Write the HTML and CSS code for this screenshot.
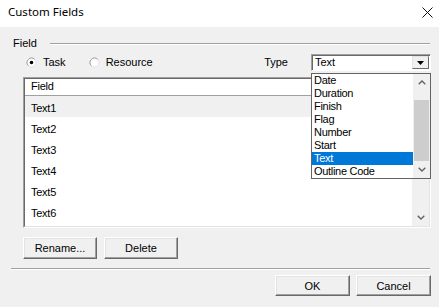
FILE: index.html
```html
<!DOCTYPE html>
<html>
<head>
<meta charset="utf-8">
<title>Custom Fields</title>
<link rel="stylesheet" href="styles.css">
</head>
<body>
<div class="window">
  <div class="titlebar">
    <span class="title">Custom Fields</span>
    <svg class="close" width="11" height="11" viewBox="0 0 11 11"><path d="M0.5 0.5L10.5 10.5M10.5 0.5L0.5 10.5" stroke="#111" stroke-width="1" fill="none"/></svg>
  </div>
  <div class="content">
    <div class="group-head"><span class="group-label">Field</span><span class="group-line"></span></div>
    <div class="type-row">
      <svg class="radio" width="11" height="11" viewBox="0 0 11 11">
        <circle cx="5.5" cy="5.5" r="4.5" fill="#fff" stroke="#e3e3e3" stroke-width="1"/>
        <path d="M8.68 2.32A4.5 4.5 0 0 0 2.32 8.68" stroke="#a0a0a0" stroke-width="1" fill="none"/>
        <circle cx="5.5" cy="5.5" r="1.8" fill="#000"/>
      </svg>
      <span class="lbl">Task</span>
      <svg class="radio radio-2" width="11" height="11" viewBox="0 0 11 11">
        <circle cx="5.5" cy="5.5" r="4.5" fill="#fff" stroke="#e3e3e3" stroke-width="1"/>
        <path d="M8.68 2.32A4.5 4.5 0 0 0 2.32 8.68" stroke="#a0a0a0" stroke-width="1" fill="none"/>
      </svg>
      <span class="lbl">Resource</span>
      <span class="lbl type-lbl">Type</span>
      <div class="combo">
        <span class="combo-text">Text</span>
        <span class="combo-btn"><svg width="7" height="4" viewBox="0 0 7 4"><path d="M0 0H7L3.5 4Z" fill="#000"/></svg></span>
      </div>
    </div>
    <div class="listbox">
      <div class="listbox-inner">
        <div class="list-main">
          <div class="list-header">Field</div>
          <div class="list-row current">Text1</div>
          <div class="list-row">Text2</div>
          <div class="list-row">Text3</div>
          <div class="list-row">Text4</div>
          <div class="list-row">Text5</div>
          <div class="list-row">Text6</div>
        </div>
        <div class="vscroll">
          <span class="sb-track"></span>
          <span class="sb-arrow"><svg width="8" height="5" viewBox="0 0 8 5"><path d="M0.7 0.7L4 4L7.3 0.7" stroke="#606060" stroke-width="1.3" fill="none"/></svg></span>
        </div>
      </div>
    </div>
    <div class="btn-row">
      <button class="btn">Rename...</button>
      <button class="btn">Delete</button>
    </div>
    <div class="separator"></div>
    <div class="footer">
      <button class="btn btn-wide">OK</button>
      <button class="btn btn-wide">Cancel</button>
    </div>
  </div>
  <div class="dropdown">
    <div class="dd-items">
      <div class="dd-item">Date</div>
      <div class="dd-item">Duration</div>
      <div class="dd-item">Finish</div>
      <div class="dd-item">Flag</div>
      <div class="dd-item">Number</div>
      <div class="dd-item">Start</div>
      <div class="dd-item selected">Text</div>
      <div class="dd-item">Outline Code</div>
    </div>
    <div class="dd-scroll">
      <span class="sb-arrow"><svg width="8" height="5" viewBox="0 0 8 5"><path d="M0.7 4.3L4 1L7.3 4.3" stroke="#606060" stroke-width="1.3" fill="none"/></svg></span>
      <span class="dd-track"><span class="dd-thumb"></span></span>
      <span class="sb-arrow"><svg width="8" height="5" viewBox="0 0 8 5"><path d="M0.7 0.7L4 4L7.3 0.7" stroke="#606060" stroke-width="1.3" fill="none"/></svg></span>
    </div>
  </div>
</div>
</body>
</html>
```
FILE: styles.css
```css
* { box-sizing: border-box; }
html, body { margin: 0; padding: 0; }
body { background: #f0f0f0; font-family: "Liberation Sans", Arial, sans-serif; font-size: 11px; color: #000; }

.window {
  position: relative;
  width: 439px;
  height: 307px;
  background: #f0f0f0;
  display: flex;
  flex-direction: column;
  overflow: hidden;
}

.titlebar {
  height: 27px;
  background: #fff;
  display: flex;
  align-items: flex-start;
  justify-content: space-between;
  padding: 4px 6px 0 8px;
}
.title {
  font-family: "Noto Sans", "Open Sans", sans-serif;
  font-size: 11.5px;
  line-height: 16px;
}
.close { margin-top: 3px; }

.content { display: flex; flex-direction: column; }

.group-head {
  height: 12px;
  margin: 10px 9px 0 13px;
  display: flex;
  align-items: center;
}
.group-label { line-height: 12px; }
.group-line {
  flex: 1;
  height: 1px;
  margin-left: 13px;
  background: #a0a0a0;
  box-shadow: 0 1px 0 #fff;
}

.type-row {
  height: 17px;
  margin-top: 5px;
  padding: 0 8px 0 26px;
  display: flex;
  align-items: center;
}
.radio { flex: none; }
.radio-2 { margin-left: 23px; }
.lbl { margin-left: 6px; line-height: 13px; }
.type-lbl { margin-left: auto; margin-right: 23px; }

.combo {
  width: 120px;
  height: 17px;
  background: #fff;
  border: 1px solid;
  border-color: #a0a0a0 #fff #fff #a0a0a0;
  display: flex;
  align-items: center;
  position: relative;
}
.combo::before {
  content: "";
  position: absolute;
  inset: 0;
  border-top: 1px solid #696969;
  border-left: 1px solid #696969;
  pointer-events: none;
}
.combo-text { flex: 1; padding-left: 3px; line-height: 13px; }
.combo-btn {
  width: 17px;
  height: 13px;
  margin-right: 1px;
  background: #f0f0f0;
  border: 1px solid;
  border-color: #e3e3e3 #696969 #696969 #e3e3e3;
  display: flex;
  align-items: center;
  justify-content: center;
}

.listbox {
  height: 151px;
  margin: 6px 8px 0 23px;
  border: 1px solid;
  border-color: #a0a0a0 #fff #fff #a0a0a0;
}
.listbox-inner {
  height: 100%;
  border: 1px solid;
  border-color: #696969 #e3e3e3 #e3e3e3 #696969;
  background: #fff;
  display: grid;
  grid-template-columns: 1fr 17px;
  overflow: hidden;
}
.list-main { overflow: hidden; letter-spacing: -0.25px; }
.list-header {
  height: 17px;
  line-height: 15px;
  padding-left: 6px;
  background: #fff;
  border-bottom: 1px solid #a0a0a0;
}
.list-row {
  height: 21px;
  padding: 3px 0 0 6px;
  line-height: 18px;
}
.list-row.current { background: #f0f0f0; }

.vscroll {
  background: #f0f0f0;
  display: flex;
  flex-direction: column;
}
.sb-track { flex: 1; }
.sb-arrow {
  height: 17px;
  flex: none;
  display: flex;
  align-items: center;
  justify-content: center;
}

.btn-row {
  margin-top: 9px;
  padding-left: 23px;
  display: flex;
  gap: 7px;
}
.btn {
  width: 74px;
  height: 22px;
  padding: 0;
  font-family: "Liberation Sans", Arial, sans-serif;
  font-size: 11px;
  color: #000;
  background: #f0f0f0;
  border: 1px solid;
  border-color: #fff #696969 #696969 #fff;
  box-shadow: inset -1px -1px 0 #a0a0a0, inset 1px 1px 0 #e3e3e3;
}
.btn-wide { width: 75px; height: 21px; }

.separator {
  height: 1px;
  margin: 9px 9px 0 11px;
  background: #a0a0a0;
  box-shadow: 0 1px 0 #fff;
}

.footer {
  margin-top: 6px;
  padding-right: 8px;
  display: flex;
  justify-content: flex-end;
  gap: 6px;
}

.dropdown {
  position: absolute;
  left: 311px;
  top: 73px;
  width: 120px;
  height: 106px;
  border: 1px solid #646464;
  background: #fff;
  display: flex;
}
.dd-items { flex: 1; letter-spacing: -0.3px; }
.dd-item {
  height: 13px;
  line-height: 13px;
  padding-left: 2px;
}
.dd-item.selected { background: #0078d7; color: #fff; }
.dd-scroll {
  width: 17px;
  background: #f0f0f0;
  display: flex;
  flex-direction: column;
}
.dd-track { flex: 1; display: flex; flex-direction: column; justify-content: flex-end; padding: 0 1px; }
.dd-thumb { height: 61px; background: #cdcdcd; }
```
